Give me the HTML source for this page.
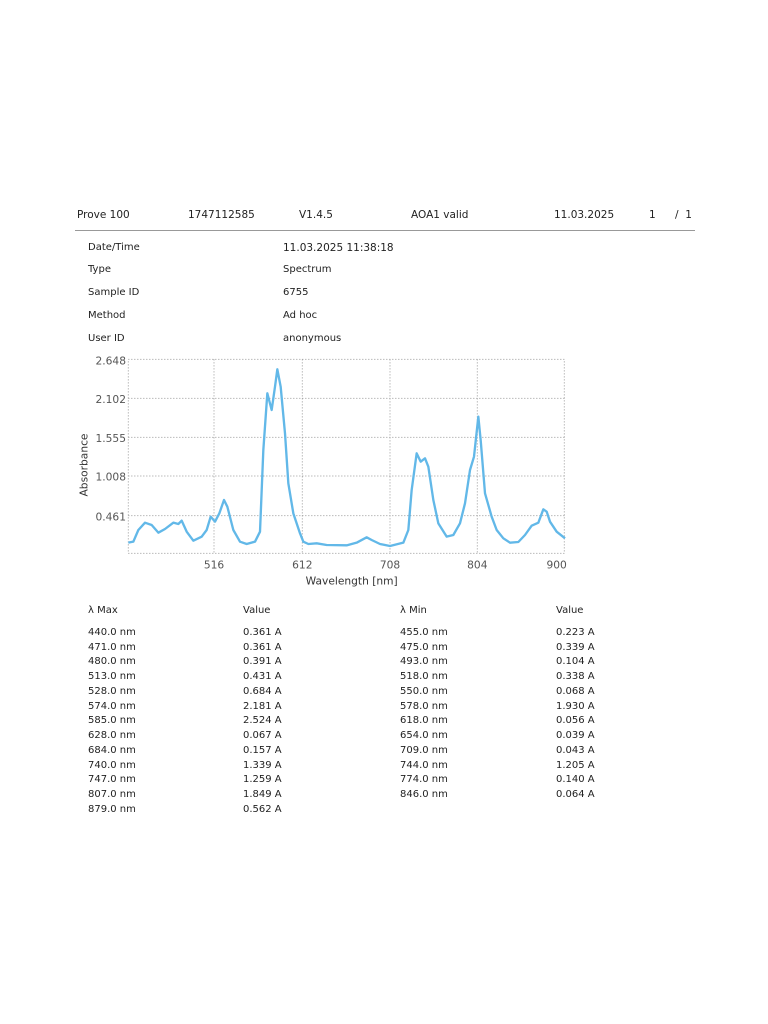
<!DOCTYPE html>
<html><head><meta charset="utf-8"><style>
html,body{margin:0;padding:0;background:#fff;}
body{width:768px;height:1024px;position:relative;overflow:hidden;font-family:"DejaVu Sans","Liberation Sans",sans-serif;color:#222;font-size:10px;}
.t{position:absolute;white-space:nowrap;line-height:1;}
.h{font-size:10.5px;}
</style></head><body>
<div class="t h" style="left:77px;top:210px">Prove 100</div>
<div class="t h" style="left:188px;top:210px">1747112585</div>
<div class="t h" style="left:299px;top:210px">V1.4.5</div>
<div class="t h" style="left:411px;top:210px">AOA1 valid</div>
<div class="t h" style="left:554px;top:210px">11.03.2025</div>
<div class="t h" style="left:649px;top:210px">1</div>
<div class="t h" style="left:675px;top:210px">/&nbsp; 1</div>
<div style="position:absolute;left:75px;top:230px;width:620px;height:1px;background:#999"></div>

<div class="t" style="left:88px;top:243px">Date/Time</div>
<div class="t h" style="left:283px;top:243px">11.03.2025 11:38:18</div>
<div class="t" style="left:88px;top:265px">Type</div>
<div class="t" style="left:283px;top:265px">Spectrum</div>
<div class="t" style="left:88px;top:288px">Sample ID</div>
<div class="t" style="left:283px;top:288px">6755</div>
<div class="t" style="left:88px;top:311px">Method</div>
<div class="t" style="left:283px;top:311px">Ad hoc</div>
<div class="t" style="left:88px;top:334px">User ID</div>
<div class="t" style="left:283px;top:334px">anonymous</div>

<svg style="position:absolute;left:70px;top:350px" width="510" height="240" viewBox="0 0 1530 720">
<g stroke="#999" stroke-width="3" stroke-dasharray="3,6" fill="none">
<rect x="175" y="28" width="1308" height="582"/>
<line x1="175" y1="145" x2="1483" y2="145"/>
<line x1="175" y1="262" x2="1483" y2="262"/>
<line x1="175" y1="378" x2="1483" y2="378"/>
<line x1="175" y1="497" x2="1483" y2="497"/>
<line x1="432" y1="28" x2="432" y2="610"/>
<line x1="697" y1="28" x2="697" y2="610"/>
<line x1="960" y1="28" x2="960" y2="610"/>
<line x1="1222" y1="28" x2="1222" y2="610"/>
</g>
<g font-family="DejaVu Sans, sans-serif" font-size="32" fill="#555" text-anchor="end">
<text x="168" y="43">2.648</text><text x="168" y="159">2.102</text><text x="168" y="276">1.555</text><text x="168" y="392">1.008</text><text x="168" y="511">0.461</text>
</g>
<g font-family="DejaVu Sans, sans-serif" font-size="32" fill="#555" text-anchor="middle">
<text x="432" y="656">516</text><text x="697" y="656">612</text><text x="960" y="656">708</text><text x="1222" y="656">804</text><text x="1460" y="656">900</text>
<text x="845" y="704" fill="#333">Wavelength [nm]</text>
<text transform="translate(52,345) rotate(-90)" fill="#333">Absorbance</text>
</g>
<polyline fill="none" stroke="#62b8e8" stroke-width="7" stroke-linejoin="round" points="175,578 190,575 205,540 225,518 245,525 265,548 285,537 310,518 325,522 335,512 350,545 370,572 395,560 410,540 422,500 435,515 448,490 462,450 472,470 490,540 510,575 530,582 555,575 570,545 580,300 592,130 605,180 615,110 622,58 632,110 645,250 655,400 670,490 690,550 700,575 715,582 740,580 770,585 830,586 860,578 890,562 905,570 930,582 960,588 1000,578 1015,540 1025,420 1040,310 1052,335 1065,325 1075,350 1090,450 1105,520 1130,560 1150,555 1170,520 1185,460 1200,360 1212,320 1225,200 1232,270 1245,430 1265,500 1280,540 1300,565 1320,578 1345,576 1365,555 1385,527 1405,518 1420,478 1430,485 1440,515 1460,545 1485,565"/>
</svg>

<div style="position:absolute;left:88px;top:604px;line-height:14.75px;">λ Max<br><div style="height:7px"></div>440.0 nm<br>471.0 nm<br>480.0 nm<br>513.0 nm<br>528.0 nm<br>574.0 nm<br>585.0 nm<br>628.0 nm<br>684.0 nm<br>740.0 nm<br>747.0 nm<br>807.0 nm<br>879.0 nm</div>
<div style="position:absolute;left:243px;top:604px;line-height:14.75px;">Value<br><div style="height:7px"></div>0.361 A<br>0.361 A<br>0.391 A<br>0.431 A<br>0.684 A<br>2.181 A<br>2.524 A<br>0.067 A<br>0.157 A<br>1.339 A<br>1.259 A<br>1.849 A<br>0.562 A</div>
<div style="position:absolute;left:400px;top:604px;line-height:14.75px;">λ Min<br><div style="height:7px"></div>455.0 nm<br>475.0 nm<br>493.0 nm<br>518.0 nm<br>550.0 nm<br>578.0 nm<br>618.0 nm<br>654.0 nm<br>709.0 nm<br>744.0 nm<br>774.0 nm<br>846.0 nm</div>
<div style="position:absolute;left:556px;top:604px;line-height:14.75px;">Value<br><div style="height:7px"></div>0.223 A<br>0.339 A<br>0.104 A<br>0.338 A<br>0.068 A<br>1.930 A<br>0.056 A<br>0.039 A<br>0.043 A<br>1.205 A<br>0.140 A<br>0.064 A</div>
</body></html>
